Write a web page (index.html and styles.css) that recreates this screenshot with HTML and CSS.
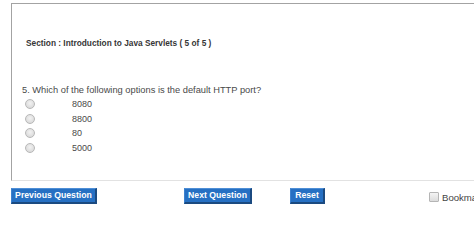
FILE: index.html
```html
<!DOCTYPE html>
<html>
<head>
<meta charset="utf-8">
<link rel="stylesheet" href="styles.css">
</head>
<body>
<div class="page">
  <div class="panel">
    <div class="section">Section : Introduction to Java Servlets ( 5 of 5 )</div>
    <div class="question">5. Which of the following options is the default HTTP port?</div>
    <div class="options">
      <label class="opt"><input type="radio" name="q" class="radio"><span class="lbl">8080</span></label>
      <label class="opt"><input type="radio" name="q" class="radio"><span class="lbl">8800</span></label>
      <label class="opt"><input type="radio" name="q" class="radio"><span class="lbl">80</span></label>
      <label class="opt"><input type="radio" name="q" class="radio"><span class="lbl">5000</span></label>
    </div>
  </div>
  <div class="actions">
    <button class="btn btn-prev">Previous Question</button>
    <button class="btn btn-next">Next Question</button>
    <button class="btn btn-reset">Reset</button>
    <label class="bookmark"><input type="checkbox" class="check"><span>Bookmark</span></label>
  </div>
</div>
</body>
</html>
```
FILE: styles.css
```css
html, body {
  margin: 0;
  padding: 0;
  background: #ffffff;
  overflow: hidden;
}
.page {
  width: 474px;
  height: 239px;
  overflow: hidden;
  font-family: "Liberation Sans", Arial, sans-serif;
}
.panel {
  margin: 3px 0 0 11px;
  width: 620px;
  height: 178px;
  border: 1px solid #a3a3a3;
  border-bottom-color: #e2e2e2;
  box-sizing: border-box;
  display: flex;
  flex-direction: column;
}
.section {
  margin-top: 33px;
  padding-left: 14px;
  font-size: 8.3px;
  line-height: 12px;
  font-weight: bold;
  color: #363636;
  white-space: nowrap;
}
.question {
  margin-top: 35px;
  padding-left: 10px;
  font-size: 9.3px;
  line-height: 12px;
  color: #4a4a4a;
  white-space: nowrap;
}
.options {
  display: flex;
  flex-direction: column;
  margin-top: 0.6px;
}
.opt {
  display: flex;
  align-items: center;
  height: 14.7px;
  padding-left: 13px;
}
.radio {
  appearance: none;
  -webkit-appearance: none;
  margin: 0;
  width: 10px;
  height: 10px;
  border-radius: 50%;
  border: 1px solid #b8b8b8;
  background: radial-gradient(circle at 50% 40%, #f2f2f2 0%, #dcdcdc 70%, #cfcfcf 100%);
  box-sizing: border-box;
}
.lbl {
  margin-left: 37px;
  font-size: 9px;
  color: #4a4a4a;
}
.actions {
  display: flex;
  align-items: center;
  margin-top: 7px;
  padding-left: 11px;
  white-space: nowrap;
  width: 620px;
}
.actions > * {
  flex-shrink: 0;
}
.btn {
  height: 16px;
  margin: 0;
  padding: 0 0 1px 0;
  font-family: "Liberation Sans", Arial, sans-serif;
  font-size: 8.7px;
  font-weight: bold;
  color: #ffffff;
  background: #2670c3;
  border-style: solid;
  border-width: 1px 2px 2px 1px;
  border-color: #4f8fd6 #1b4a80 #1b4a80 #3d82cf;
  box-sizing: border-box;
  line-height: 12px;
}
.btn-prev { width: 86px; }
.btn-next { width: 68px; margin-left: 87px; }
.btn-reset { width: 35px; margin-left: 38px; }
.bookmark {
  display: flex;
  align-items: center;
  margin-left: 104px;
  margin-top: 2px;
  font-size: 9.6px;
  color: #444444;
}
.check {
  appearance: none;
  -webkit-appearance: none;
  margin: 0 3px 0 0;
  width: 10px;
  height: 10px;
  border: 1px solid #b5b5b5;
  background: linear-gradient(#f4f4f4, #dcdcdc);
  box-sizing: border-box;
  border-radius: 1px;
}
```
